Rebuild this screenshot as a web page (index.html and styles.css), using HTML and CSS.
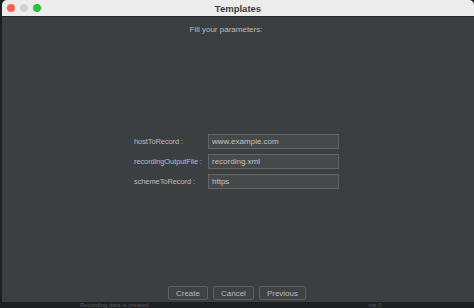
FILE: index.html
```html
<!DOCTYPE html>
<html>
<head>
  <meta charset="UTF-8">
  <title>Templates</title>
  <link rel="stylesheet" href="styles.css">
</head>
<body>
  <div class="window">
    <div class="titlebar">
      <div class="lights">
        <span class="light red"></span>
        <span class="light gray"></span>
        <span class="light green"></span>
      </div>
      <div class="title">Templates</div>
    </div>

    <div class="content">
      <p class="intro">Fill your parameters:</p>

      <form class="params">
        <label for="host">hostToRecord :</label>
        <input type="text" id="host" value="www.example.com">

        <label for="out">recordingOutputFile :</label>
        <input type="text" id="out" value="recording.xml">

        <label for="scheme">schemeToRecord :</label>
        <input type="text" id="scheme" value="https">
      </form>

      <div class="buttons">
        <button type="button">Create</button>
        <button type="button">Cancel</button>
        <button type="button">Previous</button>
      </div>
    </div>
  </div>
  <div class="behind">
    <span class="ghost">Recording data is created</span>
    <span class="ghost short">ms 0</span>
  </div>
</body>
</html>
```

FILE: styles.css
```css
body { margin: 0; background: #1e1f20; font-family: "Liberation Sans", Arial, sans-serif; height: 308px; overflow: hidden; }
.window { margin-left: 2px; height: 302px; display: flex; flex-direction: column; background: #3c3f41; border-radius: 5px 5px 0 0; overflow: hidden; }
.titlebar { height: 16px; flex: none; background: #ececec; border-bottom: 1px solid #2a2a2a; display: flex; align-items: center; position: relative; }
.lights { display: flex; gap: 5px; padding-left: 5px; }
.light { width: 8px; height: 8px; border-radius: 50%; display: block; }
.red { background: #fd5d54; }
.gray { background: #d3d2d3; }
.green { background: #27c138; }
.title { position: absolute; left: 0; right: 0; text-align: center; font-size: 9.5px; font-weight: bold; color: #3b3b3b; }
.content { flex: 1; display: flex; flex-direction: column; }
.intro { margin: 8px 0 0; text-align: center; font-size: 8px; color: #bbbbbb; padding-right: 24px; }
.params { margin: 100px 0 0 132px; display: grid; grid-template-columns: 74px 131px; row-gap: 5px; align-items: center; }
.params label { font-size: 7.5px; color: #bbbbbb; white-space: nowrap; letter-spacing: -0.1px; }
.params input { box-sizing: border-box; height: 15px; width: 131px; margin: 0; padding: 0 3px; background: #45494a; border: 1px solid #646464; border-radius: 0; color: #c4c4c4; font-family: inherit; font-size: 8px; outline: none; }
.buttons { margin-top: auto; margin-bottom: 2px; display: flex; justify-content: center; gap: 5px; padding-right: 2px; }
.buttons button { height: 14px; padding: 0 7px; background: #3f4244; border: 1px solid #5e6163; border-radius: 2px; color: #bbbbbb; font-family: inherit; font-size: 8px; }
.behind { height: 6px; display: flex; gap: 220px; padding-left: 80px; overflow: hidden; }
.ghost { font-size: 6px; line-height: 6px; color: #5a5a5a; white-space: nowrap; }
```
